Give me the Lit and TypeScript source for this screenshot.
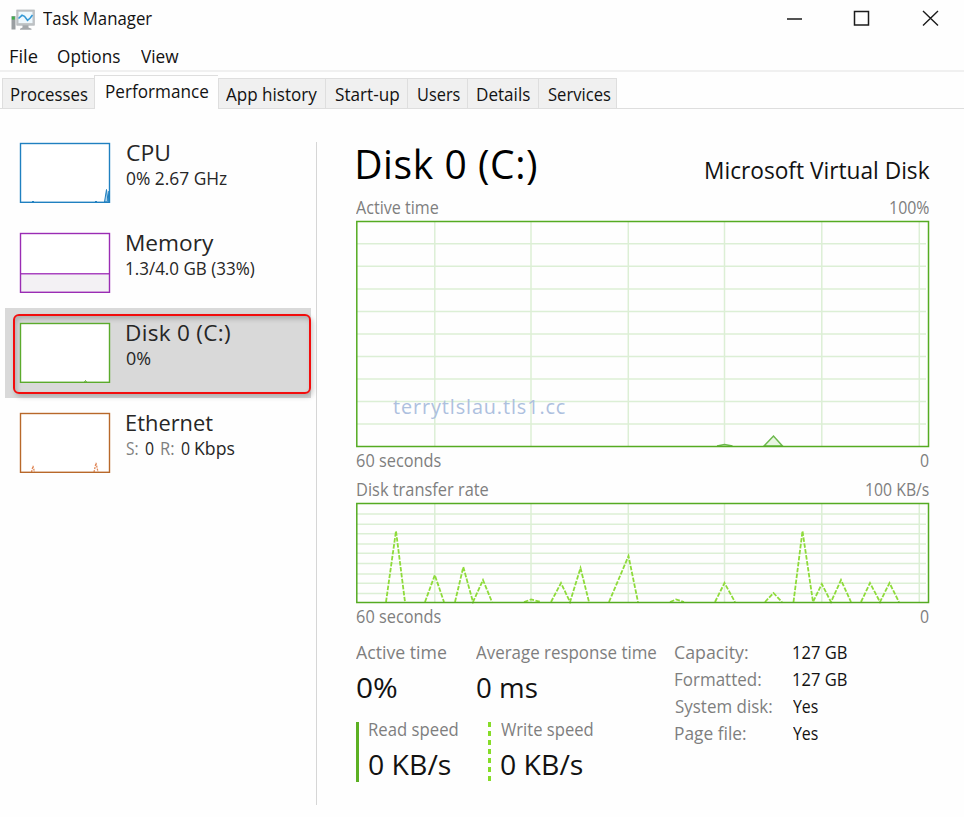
import { LitElement, html, svg, css } from "lit";
import { customElement, property } from "lit/decorators.js";

const FAMILY = '"Open Sans", "Noto Sans", sans-serif';
const pen = document.createElement("canvas").getContext("2d")!;

/** A single line of text whose glyphs span exactly `w` pixels. */
@customElement("fit-text")
class FitText extends LitElement {
  @property() text = "";
  @property({ type: Number }) w = 0;
  @property({ type: Number }) size = 17.6;
  @property({ type: Number }) spacing = 0;

  static styles = css`
    :host { display: block; flex: none; white-space: pre; line-height: 26px; }
    .t { display: inline-block; transform-origin: 0 50%; vertical-align: top; }
  `;

  render() {
    pen.font = `${this.size}px ${FAMILY}`;
    const m = pen.measureText(this.text);
    const ink = m.actualBoundingBoxLeft + m.actualBoundingBoxRight + this.spacing * (this.text.length - 1);
    const k = this.w / ink;
    const dx = m.actualBoundingBoxLeft * k;
    this.style.width = `${this.w}px`;
    return html`<span class="t" style="font-size:${this.size}px;letter-spacing:${this.spacing}px;transform:translateX(${dx}px) scaleX(${k})">${this.text}</span>`;
  }
}

const t = (text: string, w: number, size = 17.6, cls = "", spacing = 0) =>
  html`<fit-text class=${cls} .text=${text} .w=${w} .size=${size} .spacing=${spacing}></fit-text>`;

const TABS = [
  { name: "Processes", width: 92, ink: 76.5, pad: 8 },
  { name: "Performance", width: 124, ink: 102, pad: 11, active: true },
  { name: "App history", width: 107, ink: 91, pad: 7 },
  { name: "Start-up", width: 82, ink: 64, pad: 9 },
  { name: "Users", width: 60, ink: 42, pad: 9.5 },
  { name: "Details", width: 71, ink: 53, pad: 9 },
  { name: "Services", width: 79, ink: 62.5, pad: 9 },
];

const COLUMNS = [434.8, 531, 628.3, 724.5, 821.8, 919.3];
const ACTIVE_ROWS = [243.8, 266.3, 288.9, 311.4, 334, 356.5, 379, 401.5, 424];
const RATE_ROWS = [514, 524.3, 533.8, 544, 553.2, 563.5, 574, 583.2, 593.5];

const grid = (rows: number[], top: number, bottom: number) => svg`
  ${rows.map((y) => svg`<line x1="357" x2="926" y1=${y} y2=${y}/>`)}
  ${COLUMNS.map((x) => svg`<line x1=${x} x2=${x} y1=${top} y2=${bottom}/>`)}`;

@customElement("app-root")
class AppRoot extends LitElement {
  static styles = css`
    :host {
      display: flex; flex-direction: column; box-sizing: border-box;
      width: 964px; height: 817px; overflow: hidden; background: #fefefe;
      font-family: "Open Sans", "Noto Sans", sans-serif; color: #121212;
    }
    svg { display: block; flex: none; }
    .titlebar { display: flex; height: 43px; box-sizing: border-box; padding: 5px 25px 0 10px; }
    .logo { margin: 3px 8px 0 0; }
    .controls { margin: 4px 0 0 auto; }
    .menu { display: flex; height: 27px; padding-left: 10px; border-bottom: 2px solid #f0f0f0; gap: 21px; }
    .tabs {
      display: flex; align-items: flex-end; height: 37px; padding-left: 2px;
      box-shadow: inset 0 -1px #dedede;
    }
    .tab {
      box-sizing: border-box; height: 31px; padding-top: 2px;
      background: #f0f0f0; border: 1px solid #dedede; border-right: 0; flex: none;
    }
    .tab.active { height: 34px; background: #fefefe; border-bottom: 0; }
    .tab:last-child { border-right: 1px solid #dedede; }
    .body { display: flex; flex: 1; min-height: 0; }
    .side { width: 311px; box-sizing: border-box; padding: 19px 0 0 5px; flex: none; }
    .item { position: relative; display: flex; height: 90px; box-sizing: border-box; padding: 14px 0 0 14px; }
    .item.selected { background: #d9d9d9; }
    .mark {
      position: absolute; left: 8px; top: 6px; width: 298px; height: 80px; box-sizing: border-box;
      border: 2px solid #f20d0d; border-radius: 6px;
      box-shadow: 2px 3px 5px rgba(0,0,0,.2), inset 2px 3px 5px rgba(0,0,0,.2);
    }
    .thumb { position: relative; }
    .names { position: relative; margin: -4px 0 0 15px; color: #262626; }
    .names .big { line-height: 30px; margin-left: 0.5px; }
    .names .sub { margin-top: -3px; display: flex; }
    .gap { margin-left: 7px; }
    .gap5 { margin-left: 5px; }
    .rule { width: 1px; margin: 33px 0 12px 5px; background: #d6d6d6; flex: none; }
    .main { padding: 26px 0 0 39px; width: 574px; flex: none; }
    .row { display: flex; justify-content: space-between; width: 573px; }
    .head { height: 55px; }
    .title { line-height: 56px; color: #000; margin-left: 2px; }
    .device { line-height: 30px; margin-top: 20px; }
    .muted { color: #7e7e7e; }
    .cap { margin: 4px 0 0 0; }
    .foot { margin: -1px 0 0 1px; width: 572px; }
    .cap2 { margin: 3px 0 0 1px; width: 572px; }
    .plot { position: relative; }
    .watermark { position: absolute; left: 37px; top: 174px; color: #adc0de; }
    .stats { display: flex; margin-top: 10px; }
    .left { width: 318.5px; flex: none; }
    .pair { display: flex; }
    .cell { width: 120px; flex: none; }
    .cell .val { margin-left: 1px; }
    .val { line-height: 36px; margin-top: 4px; }
    .speeds { display: flex; margin-top: 11px; }
    .speed { display: flex; width: 132px; gap: 10px; flex: none; }
    .speed .val { margin-top: 4px; }
    .bar { margin-top: 6px; }
    .line { display: flex; height: 27px; }
    .key { width: 118.5px; flex: none; }
  `;

  private thumb(color: string, inner: unknown) {
    return svg`<svg class="thumb" width="92" height="62" viewBox="0 0 92 62">
      <rect x="1.5" y="1.5" width="89" height="59" fill="#fff"/>
      ${inner}
      <rect x="1.5" y="1.5" width="89" height="58.8" fill="none" stroke=${color} stroke-width="1.4"/>
    </svg>`;
  }

  private item(color: string, inner: unknown, name: unknown, sub: unknown, selected = false) {
    return html`<div class="item ${selected ? "selected" : ""}">
      ${selected ? html`<div class="mark"></div>` : ""}
      ${this.thumb(color, inner)}
      <div class="names">${name}<div class="sub">${sub}</div></div>
    </div>`;
  }

  render() {
    return html`
      <div class="titlebar">
        <svg class="logo" width="25" height="23" viewBox="0 0 25 23">
          <rect x="1.5" y="8" width="4" height="13.5" fill="#9a9fa2"/>
          <rect x="1.8" y="8.6" width="3" height="3" fill="#3fae49"/>
          <path d="M12.500 17h6v2.500l3 1.300v1H10v-1l2.500-1.300z" fill="#a4a8ab"/>
          <rect x="6.8" y="2" width="17.5" height="15.2" fill="#bfc3c6" stroke="#aeb3b6" stroke-width=".7"/>
          <rect x="8.5" y="3.8" width="14" height="11.3" fill="#eef8fd"/>
          <path d="M8.500 10.500l3.500-3.200 2.500 1 3 4 2.500-2 2.500-3.300" fill="none" stroke="#3298d5" stroke-width="1.600"/>
        </svg>
        ${t("Task Manager", 109)}
        <svg class="controls" width="154" height="22" viewBox="785 9 154 22" fill="none" stroke="#1b1b1b" stroke-width="1.5">
          <path d="M787 19h15M854.500 11.500h14v13.500h-14z"/>
          <path d="M923 11l15 14.500M938 11l-15 14.500" stroke-width="1.400"/>
        </svg>
      </div>
      <div class="menu">${t("File", 27)}${t("Options", 62)}${t("View", 38)}</div>
      <div class="tabs">
        ${TABS.map((b) => html`<div class="tab ${b.active ? "active" : ""}" style="width:${b.width}px;padding-left:${b.pad}px">${t(b.name, b.ink)}</div>`)}
      </div>
      <div class="body">
        <div class="side">
          ${this.item("#2080c0",
            svg`<path d="M13 60l1-1 1 1M76 60l1-1 1 1M85.500 60l2-12.500 1.500 11.500 1-10v11z" fill="#a8d0ea" stroke="#2080c0"/>`,
            t("CPU", 42.5, 22.5, "big"), t("0% 2.67 GHz", 101))}
          ${this.item("#9a2cb4",
            svg`<rect x="2" y="42" width="88" height="18" fill="#f3f1f4"/><path d="M2 41.800h88" stroke="#a945c0" stroke-width="1.400"/>`,
            t("Memory", 87, 22.5, "big"), t("1.3/4.0 GB (33%)", 128.5))}
          ${this.item("#5bab2c",
            svg`<path d="M65.500 60l1-1.500 1 1.500" fill="none" stroke="#5bab2c"/>`,
            t("Disk 0 (C:)", 103, 22.5, "big", 0.3), t("0%", 24.5), true)}
          ${this.item("#b8682a",
            svg`<path d="M12.500 60l1.500-6 1.500 6M75 60l2-9 2 9" fill="none" stroke="#e08a5c" stroke-width="1.300" stroke-dasharray="2 1"/>`,
            t("Ethernet", 86, 22.5, "big"),
            html`${t("S:", 12, 17.6, "muted")}${t("0", 9, 17.6, "gap")}${t("R:", 13, 17.6, "muted gap")}${t("0", 9, 17.6, "gap")}${t("Kbps", 39.5, 17.6, "gap5")}`)}
        </div>
        <div class="rule"></div>
        <div class="main">
          <div class="row head">
            ${t("Disk 0 (C:)", 178.5, 41, "title", 0.6)}
            ${t("Microsoft Virtual Disk", 223.5, 23, "device")}
          </div>
          <div class="row muted cap">${t("Active time", 82)}${t("100%", 39)}</div>
          <div class="plot">
            <svg width="574" height="228" viewBox="356 220 574 228" fill="none">
              <g stroke="#dcefd5" stroke-width="1.5">${grid(ACTIVE_ROWS, 222, 446)}</g>
              <path d="M717 446l7.500-1.500 8 1.500M764 446l9.500-10 9 10z" fill="#e8f5e2" stroke="#6cb84c" stroke-width="1.500"/>
              <rect x="356.800" y="221.500" width="571.700" height="225" stroke="#55ab22" stroke-width="1.500"/>
            </svg>
            ${t("terrytlslau.tls1.cc", 172, 19.5, "watermark", 0.9)}
          </div>
          <div class="row muted foot">${t("60 seconds", 84)}${t("0", 9)}</div>
          <div class="row muted cap2">${t("Disk transfer rate", 131)}${t("100 KB/s", 63)}</div>
          <svg width="574" height="102" viewBox="356 502 574 102" fill="none">
            <g stroke="#dcefd5" stroke-width="1.5">${grid(RATE_ROWS, 504, 602)}</g>
            <path d="M386 602L396 531L405 602M425 602L434.800 575L444 602M455 602L463.300 567L473 602L483 580L492 602M524 602L531 599.500L541 602M551 602L561 583L570 602L580.500 568L589 602M609 602L628.500 556L638 602M670 602L676 599.500L684 602M715 602L724.500 583L735 602M765 602L773.500 593L782 602M793.500 602L802.500 531L813 602L821.800 584L831 602L841 580L851 602M861 602L870 583L880 602L889.500 583L899 602"
              stroke="#8edb3a" stroke-width="1.800" stroke-dasharray="4.500 1.500"/>
            <rect x="356.800" y="503.500" width="571.700" height="99" stroke="#55ab22" stroke-width="1.500"/>
          </svg>
          <div class="row muted foot">${t("60 seconds", 84)}${t("0", 9)}</div>
          <div class="stats">
            <div class="left">
              <div class="pair">
                <div class="cell">${t("Active time", 90, 17.6, "muted")}${t("0%", 39.5, 28, "val")}</div>
                <div class="cell">${t("Average response time", 180, 17.6, "muted")}${t("0 ms", 60.5, 28, "val")}</div>
              </div>
              <div class="speeds">
                <div class="speed">
                  <svg class="bar" width="3" height="60"><path d="M1.500 0v60" stroke="#5cb022" stroke-width="3"/></svg>
                  <div>${t("Read speed", 89, 17.6, "muted")}${t("0 KB/s", 82, 28, "val")}</div>
                </div>
                <div class="speed">
                  <svg class="bar" width="3" height="60"><path d="M1.500 0v60" stroke="#86dc28" stroke-width="3" stroke-dasharray="5 4"/></svg>
                  <div>${t("Write speed", 92, 17.6, "muted")}${t("0 KB/s", 82, 28, "val")}</div>
                </div>
              </div>
            </div>
            <div>
              ${([["Capacity:", 73, "127 GB", 54], ["Formatted:", 86, "127 GB", 54], ["System disk:", 97, "Yes", 25], ["Page file:", 71, "Yes", 25]] as [string, number, string, number][]).map(
                ([k, kw, v, vw]) => html`<div class="line"><div class="key muted">${t(k, kw)}</div>${t(v, vw)}</div>`)}
            </div>
          </div>
        </div>
      </div>`;
  }
}
